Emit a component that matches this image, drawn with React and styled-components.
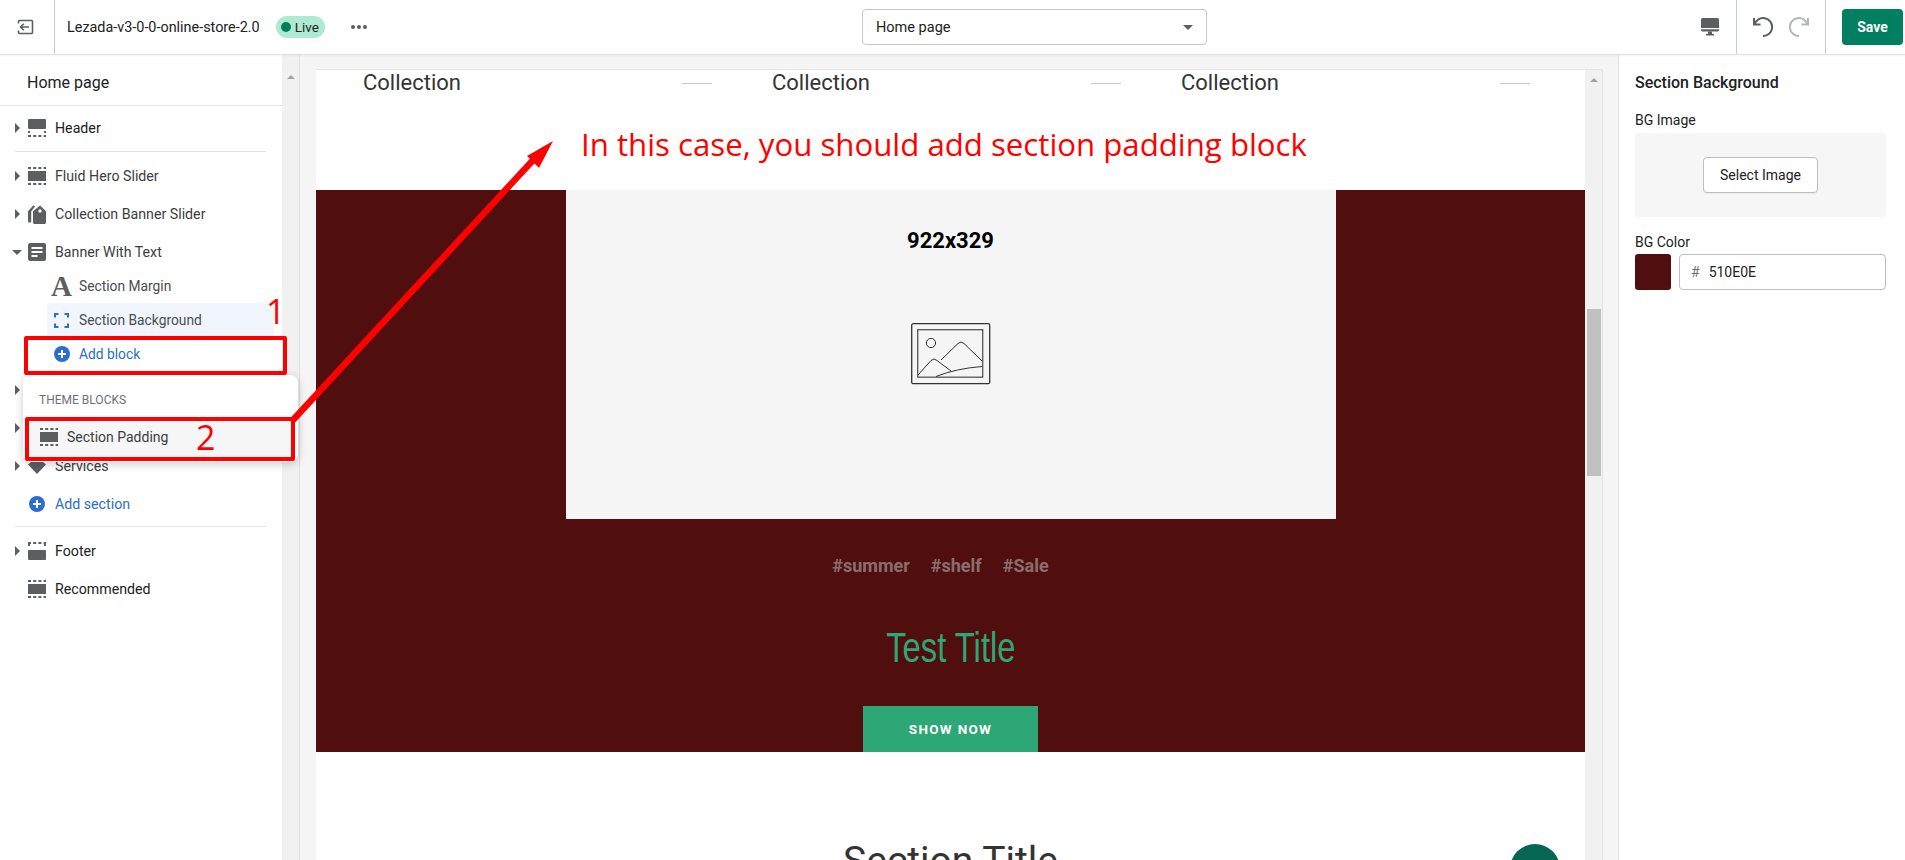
import React from 'react';
import styled, { createGlobalStyle } from 'styled-components';

const uiFont = '"Roboto", "Liberation Sans", sans-serif';
const iconGrey = '#5c5f62';
const blue = '#2c6ecb';

const GlobalStyle = createGlobalStyle`
  html, body { margin: 0; padding: 0; background: #fff; }
  body { font-family: ${uiFont}; color: #202223; overflow: hidden; }
  * { box-sizing: border-box; }
`;

const Page = styled.div`
  position: relative;
  width: 1905px;
  height: 860px;
  display: flex;
  flex-direction: column;
  overflow: hidden;
`;

/* top bar */
const TopBar = styled.header`
  height: 55px;
  flex: none;
  display: flex;
  align-items: center;
  background: #fff;
  border-bottom: 1px solid #dfe1e4;
  box-shadow: 0 1px 2px rgba(0, 0, 0, 0.05);
  position: relative;
  z-index: 2;
`;
const TopLeft = styled.div`
  width: 862px;
  flex: none;
  display: flex;
  align-items: center;
  height: 100%;
`;
const ExitCell = styled.div`
  width: 55px;
  height: 100%;
  display: flex;
  align-items: center;
  justify-content: center;
  border-right: 1px solid #c9cccf;
  padding-right: 3px;
`;
const ThemeName = styled.span`
  margin-left: 12px;
  font-size: 14.4px;
  color: #202223;
`;
const LiveBadge = styled.span`
  margin-left: 16px;
  height: 22px;
  width: 49px;
  padding-left: 5px;
  display: flex;
  align-items: center;
  gap: 4px;
  border-radius: 11px;
  background: #aee9d1;
  font-size: 13.5px;
  color: #202223;
`;
const LiveDot = styled.span`
  width: 10px;
  height: 10px;
  flex: none;
  border-radius: 50%;
  background: #007f5f;
`;
const MoreDots = styled.div`
  margin-left: 26px;
  display: flex;
  gap: 2px;
  span {
    width: 4px;
    height: 4px;
    border-radius: 50%;
    background: ${iconGrey};
  }
`;
const PageSelect = styled.div`
  width: 345px;
  height: 36px;
  flex: none;
  padding: 0 13px 0 13px;
  display: flex;
  align-items: center;
  justify-content: space-between;
  border: 1px solid #c4c6c8;
  border-radius: 4px;
  font-size: 14.5px;
`;
const TopRight = styled.div`
  flex: 1;
  height: 100%;
  display: flex;
  align-items: center;
  justify-content: flex-end;
`;
const ViewCell = styled.div`
  width: 44px;
  height: 100%;
  display: flex;
  align-items: center;
  padding-left: 9px;
`;
const HistoryCell = styled.div`
  width: 90px;
  height: 100%;
  display: flex;
  align-items: center;
  gap: 16px;
  padding-left: 16px;
  border-left: 1px solid #c4cdd5;
  border-right: 1px solid #c4cdd5;
`;
const SaveButton = styled.div`
  width: 61px;
  height: 36px;
  margin: 0 2px 0 16px;
  display: flex;
  align-items: center;
  justify-content: center;
  border-radius: 4px;
  background: #008060;
  color: #fff;
  font-size: 14px;
  font-weight: 700;
`;

/* main area */
const Body = styled.div`
  flex: 1;
  min-height: 0;
  display: flex;
`;
const Sidebar = styled.aside`
  width: 282px;
  flex: none;
  background: #fff;
`;
const SidebarHead = styled.div`
  height: 51px;
  padding: 4px 0 0 27px;
  display: flex;
  align-items: center;
  border-bottom: 1px solid #e1e3e5;
  font-size: 16px;
  color: #202223;
`;
const Tree = styled.div`
  padding-top: 3px;
`;
const Row = styled.div`
  height: 38px;
  display: flex;
  align-items: center;
  padding-left: 15px;
  font-size: 14.2px;
  color: ${p => (p.$dark ? '#202223' : '#3b3e41')};
`;
const Rule = styled.div`
  height: 1px;
  margin: ${p => p.$margin};
  background: #e1e3e5;
`;
const CaretSlot = styled.span`
  width: 13px;
  flex: none;
  display: flex;
`;
const CaretRight = styled.span`
  width: 0;
  height: 0;
  border-left: 5px solid ${iconGrey};
  border-top: 5px solid transparent;
  border-bottom: 5px solid transparent;
`;
const CaretDown = styled.span`
  width: 0;
  height: 0;
  margin-left: -3px;
  border-top: 5px solid ${iconGrey};
  border-left: 5px solid transparent;
  border-right: 5px solid transparent;
`;
const RowIcon = styled.span`
  width: 18px;
  height: 18px;
  flex: none;
  margin-right: 9px;
  display: flex;
  align-items: center;
  justify-content: center;
`;
const SubList = styled.div`
  margin-top: -2px;
  padding-left: 47px;
`;
const SubRow = styled.div`
  height: 34px;
  width: 227px;
  display: flex;
  align-items: center;
  font-size: 13.8px;
  color: ${p => (p.$link ? blue : '#4a4d50')};
  background: ${p => (p.$active ? '#f1f6fe' : 'transparent')};
  border-radius: 3px;
`;
const SubIcon = styled.span`
  width: 32px;
  flex: none;
  display: flex;
  justify-content: center;
  padding-right: 3px;
`;
const SerifA = styled.span`
  font-family: "Liberation Serif", serif;
  font-weight: 700;
  font-size: 29px;
  line-height: 20px;
  color: ${iconGrey};
`;
const AddRow = styled(Row)`
  padding-left: 28px;
  color: ${blue};
`;

/* block popover */
const Popover = styled.div`
  position: absolute;
  left: 23px;
  top: 375px;
  width: 275px;
  height: 87px;
  background: #fff;
  border-radius: 8px;
  box-shadow: 0 2px 10px rgba(0, 0, 0, 0.2);
  z-index: 3;
`;
const PopoverLabel = styled.div`
  height: 43px;
  padding: 18px 0 0 16px;
  font-size: 12px;
  line-height: 14px;
  color: #6d7175;
`;
const PopoverItem = styled.div`
  height: 42px;
  margin: 0 4px;
  padding: 0 0 4px 13px;
  display: flex;
  align-items: center;
  background: #f6f6f7;
  font-size: 14px;
  color: #3b3e41;
`;

/* scrollbars */
const ScrollTrack = styled.div`
  width: 17px;
  flex: none;
  display: flex;
  flex-direction: column;
  align-items: center;
  background: #f1f1f1;
  padding-top: ${p => p.$top}px;
`;
const ScrollUp = styled.span`
  width: 0;
  height: 0;
  flex: none;
  border-bottom: 4px solid #a3a3a3;
  border-left: 4px solid transparent;
  border-right: 4px solid transparent;
`;
const ScrollThumb = styled.span`
  width: 14px;
  height: 167px;
  margin-top: 227px;
  background: #c1c1c1;
`;

/* preview */
const Preview = styled.main`
  flex: 1;
  min-width: 0;
  padding: 14px 15px 0 16px;
  display: flex;
  background: #f5f5f5;
  border-left: 1px solid #e1e1e1;
`;
const Frame = styled.div`
  flex: 1;
  min-width: 0;
  display: flex;
  background: #fff;
  border-top: 1px solid #e6e6e6;
  border-right: 1px solid #e2e2e2;
`;
const Viewport = styled.div`
  position: relative;
  flex: 1;
  min-width: 0;
  overflow: hidden;
  font-family: "Roboto", sans-serif;
`;
const CollectionStrip = styled.div`
  height: 120px;
  padding-left: 47px;
  display: flex;
  color: #333;
`;
const CollectionItem = styled.div`
  width: 409px;
  flex: none;
  height: 26px;
  display: flex;
  align-items: center;
  font-size: 22px;
  line-height: 26px;
`;
const CollectionLine = styled.span`
  width: 30px;
  height: 1px;
  margin-left: auto;
  margin-right: 60px;
  background: #c9c9c9;
`;
const Banner = styled.section`
  height: 562px;
  display: flex;
  flex-direction: column;
  align-items: center;
  background: #510e0e;
`;
const PlaceholderBox = styled.div`
  width: 770px;
  height: 329px;
  flex: none;
  display: flex;
  flex-direction: column;
  align-items: center;
  background: #f5f5f5;
`;
const Dimensions = styled.div`
  margin-top: 39px;
  height: 24px;
  font-size: 22px;
  line-height: 24px;
  font-weight: 700;
  color: #000;
`;
const PlaceholderIcon = styled.svg`
  margin-top: 70px;
`;
const Tags = styled.div`
  margin-top: 37px;
  height: 20px;
  padding-right: 20px;
  display: flex;
  gap: 21px;
  font-size: 18px;
  line-height: 20px;
  font-weight: 700;
  color: #8a6e6e;
`;
const BannerTitle = styled.h2`
  margin: 48px 0 0;
  height: 48px;
  font-family: "Liberation Sans", sans-serif;
  font-size: 42px;
  line-height: 48px;
  font-weight: 400;
  color: #2ca775;
  transform: scaleX(0.78);
`;
const ShowNow = styled.div`
  margin-top: 34px;
  width: 175px;
  height: 46px;
  display: flex;
  align-items: center;
  justify-content: center;
  background: #2ca775;
  color: #fff;
  font-size: 13.5px;
  font-weight: 700;
  letter-spacing: 1.3px;
`;
const SectionTitle = styled.h2`
  margin: 85px 0 0;
  text-align: center;
  font-size: 39px;
  line-height: 48px;
  font-weight: 400;
  color: #333;
`;
const FloatCircle = styled.span`
  position: absolute;
  left: 1194px;
  top: 774px;
  width: 50px;
  height: 50px;
  border-radius: 50%;
  background: #056654;
`;

/* settings panel */
const Settings = styled.aside`
  width: 287px;
  flex: none;
  padding: 0 19px 0 16px;
  background: #fff;
  border-left: 1px solid #e1e3e5;
`;
const SettingsTitle = styled.h3`
  margin: 0;
  height: 51px;
  padding-top: 4px;
  display: flex;
  align-items: center;
  font-size: 16px;
  font-weight: 500;
  color: #202223;
`;
const FieldLabel = styled.div`
  height: 17px;
  margin-top: ${p => p.$top}px;
  font-size: 14px;
  line-height: 17px;
  color: #202223;
`;
const ImageSlot = styled.div`
  height: 84px;
  margin-top: 4px;
  display: flex;
  align-items: center;
  justify-content: center;
  background: #f6f6f7;
  border-radius: 4px;
`;
const SelectButton = styled.div`
  width: 115px;
  height: 36px;
  display: flex;
  align-items: center;
  justify-content: center;
  background: #fff;
  border: 1px solid #babfc3;
  border-radius: 4px;
  box-shadow: 0 1px 0 rgba(0, 0, 0, 0.05);
  font-size: 14px;
  color: #202223;
`;
const ColorRow = styled.div`
  margin-top: 3px;
  display: flex;
  gap: 8px;
`;
const Swatch = styled.div`
  width: 36px;
  height: 36px;
  border-radius: 3px;
  background: #510e0e;
`;
const HexInput = styled.div`
  flex: 1;
  height: 36px;
  padding-left: 11px;
  display: flex;
  align-items: center;
  gap: 9px;
  border: 1px solid #babfc3;
  border-radius: 4px;
  font-size: 14px;
  color: #202223;
  span {
    color: #6d7175;
  }
`;

/* red annotations over the screenshot */
const RedBox = styled.div`
  position: absolute;
  left: ${p => p.$left}px;
  top: ${p => p.$top}px;
  width: ${p => p.$width}px;
  height: ${p => p.$height}px;
  border: 4px solid #f00;
  border-radius: 2px;
  z-index: 4;
`;
const RedNumber = styled.span`
  position: absolute;
  left: ${p => p.$left}px;
  top: ${p => p.$top}px;
  font-family: "Open Sans", sans-serif;
  font-size: 34px;
  line-height: 36px;
  color: #f00;
  z-index: 4;
`;
const RedNote = styled.div`
  position: absolute;
  left: 581px;
  top: 122px;
  font-family: "Open Sans", sans-serif;
  font-size: 31.2px;
  line-height: 44px;
  color: #f00;
  white-space: nowrap;
  z-index: 4;
`;
const ArrowLayer = styled.svg`
  position: absolute;
  left: 0;
  top: 0;
  pointer-events: none;
  z-index: 4;
`;

const ExitIcon = () => (
  <svg width="17" height="16" viewBox="0 0 17 16" fill="none" stroke={iconGrey} strokeWidth="1.6">
    <path d="M1.5 4.5V2.5a1 1 0 0 1 1-1h12a1 1 0 0 1 1 1v11a1 1 0 0 1-1 1h-12a1 1 0 0 1-1-1v-2" />
    <path d="M12 8H3.5M6.8 4.7 3.5 8l3.3 3.3" />
  </svg>
);

const DashLine = ({ y }) => (
  <path d={`M0 ${y}h18`} stroke={iconGrey} strokeWidth="2" strokeDasharray="3 2.2" />
);

// kind says where the solid band sits: top (header), middle (section), bottom (footer)
const LayoutIcon = ({ kind }) => (
  <svg width="18" height="18" viewBox="0 0 18 18">
    {kind === 'top' && (
      <>
        <rect x="0" y="0" width="18" height="10" rx="1" fill={iconGrey} />
        <DashLine y={17} />
        <path d="M1 12v4M17 12v4" stroke={iconGrey} strokeWidth="2" strokeDasharray="2 2" />
      </>
    )}
    {kind === 'middle' && (
      <>
        <DashLine y={1} />
        <rect x="0" y="4" width="18" height="10" fill={iconGrey} />
        <DashLine y={17} />
      </>
    )}
    {kind === 'bottom' && (
      <>
        <DashLine y={1} />
        <path d="M1 2v4M17 2v4" stroke={iconGrey} strokeWidth="2" strokeDasharray="2 2" />
        <rect x="0" y="8" width="18" height="10" rx="1" fill={iconGrey} />
      </>
    )}
  </svg>
);

const TagsIcon = () => (
  <svg width="18" height="20" viewBox="0 0 18 20" fill={iconGrey}>
    <path d="M5.5 1.2 7 2.6 3.2 7.4V18.5H1.6A1.6 1.6 0 0 1 0 17V7.2z" />
    <path d="M12 1.5 18 7.2V18.4a1.6 1.6 0 0 1-1.6 1.6H6.6A1.6 1.6 0 0 1 5 18.4V7.2zM12 5.3a1.7 1.7 0 1 0 0 3.4 1.7 1.7 0 0 0 0-3.4z" fillRule="evenodd" />
  </svg>
);

const TextBlockIcon = () => (
  <svg width="18" height="18" viewBox="0 0 18 18">
    <rect width="18" height="18" rx="2" fill={iconGrey} />
    <path d="M3.5 5h11M3.5 9h11M3.5 13h6" stroke="#fff" strokeWidth="1.8" />
  </svg>
);

const CornersIcon = () => (
  <svg width="15" height="15" viewBox="0 0 15 15" fill="none" stroke={blue} strokeWidth="2">
    <path d="M1 4.5V1h3.5M10.5 1H14v3.5M14 10.5V14h-3.5M4.5 14H1v-3.5" />
  </svg>
);

const PlusIcon = () => (
  <svg width="16" height="16" viewBox="0 0 16 16">
    <circle cx="8" cy="8" r="8" fill={blue} />
    <path d="M8 4v8M4 8h8" stroke="#fff" strokeWidth="2" />
  </svg>
);

const ServicesIcon = () => (
  <svg width="18" height="18" viewBox="0 0 18 18" fill={iconGrey}>
    <path d="M0 7.5 3 5h12l3 2.5L9 17z" />
  </svg>
);

const MonitorIcon = () => (
  <svg width="18" height="18" viewBox="0 0 18 18">
    <path d="M1.5 0h15A1.5 1.5 0 0 1 18 1.5V10H0V1.5A1.5 1.5 0 0 1 1.5 0z" fill={iconGrey} />
    <path d="M0 11.2h18v.8A1.5 1.5 0 0 1 16.5 13.5h-15A1.5 1.5 0 0 1 0 12z" fill={iconGrey} />
    <path d="M7 13.5h4V16h2v1.5H5V16h2z" fill={iconGrey} />
  </svg>
);

const HistoryIcon = ({ color, flip }) => (
  <svg width="20" height="20" viewBox="0 0 20 20" fill="none" stroke={color} strokeWidth="2" transform={flip ? 'scale(-1 1)' : undefined}>
    <path d="M1 1v6.5h6.5" />
    <path d="M1.5 7.5A9 9 0 1 1 10 19" />
  </svg>
);

const ImagePlaceholder = () => (
  <PlaceholderIcon width="80" height="62" viewBox="0 0 80 62" fill="none">
    <rect x="0.7" y="0.7" width="78" height="60" rx="1.5" stroke="#333" strokeWidth="1.3" />
    <rect x="6.7" y="6.7" width="65" height="47.5" stroke="#555" strokeWidth="1.3" />
    <circle cx="20" cy="20" r="4.6" stroke="#333" strokeWidth="1" />
    <path d="M7 52 20 37.5q3-3 6 0L40 48M30 37 47 20.5q3-3 6 0L71 38M25 53.5Q45 45.5 71 43.5" stroke="#333" strokeWidth="1" />
  </PlaceholderIcon>
);

const rows = [
  { label: 'Fluid Hero Slider', icon: <LayoutIcon kind="middle" /> },
  { label: 'Collection Banner Slider', icon: <TagsIcon /> },
];

export default function App() {
  return (
    <Page>
      <GlobalStyle />
      <TopBar>
        <TopLeft>
          <ExitCell><ExitIcon /></ExitCell>
          <ThemeName>Lezada-v3-0-0-online-store-2.0</ThemeName>
          <LiveBadge><LiveDot />Live</LiveBadge>
          <MoreDots><span /><span /><span /></MoreDots>
        </TopLeft>
        <PageSelect>
          Home page
          <CaretDown />
        </PageSelect>
        <TopRight>
          <ViewCell><MonitorIcon /></ViewCell>
          <HistoryCell>
            <HistoryIcon color={iconGrey} />
            <HistoryIcon color="#b5b8ba" flip />
          </HistoryCell>
          <SaveButton>Save</SaveButton>
        </TopRight>
      </TopBar>

      <Body>
        <Sidebar>
          <SidebarHead>Home page</SidebarHead>
          <Tree>
            <Row $dark>
              <CaretSlot><CaretRight /></CaretSlot>
              <RowIcon><LayoutIcon kind="top" /></RowIcon>
              Header
            </Row>
            <Rule $margin="4px 16px 5px 15px" />
            {rows.map(row => (
              <Row key={row.label}>
                <CaretSlot><CaretRight /></CaretSlot>
                <RowIcon>{row.icon}</RowIcon>
                {row.label}
              </Row>
            ))}
            <Row>
              <CaretSlot><CaretDown /></CaretSlot>
              <RowIcon><TextBlockIcon /></RowIcon>
              Banner With Text
            </Row>
            <SubList>
              <SubRow>
                <SubIcon><SerifA>A</SerifA></SubIcon>
                Section Margin
              </SubRow>
              <SubRow $active>
                <SubIcon><CornersIcon /></SubIcon>
                Section Background
              </SubRow>
              <SubRow $link>
                <SubIcon><PlusIcon /></SubIcon>
                Add block
              </SubRow>
            </SubList>
            <Row><CaretSlot><CaretRight /></CaretSlot></Row>
            <Row><CaretSlot><CaretRight /></CaretSlot></Row>
            <Row>
              <CaretSlot><CaretRight /></CaretSlot>
              <RowIcon><ServicesIcon /></RowIcon>
              Services
            </Row>
            <AddRow>
              <RowIcon><PlusIcon /></RowIcon>
              Add section
            </AddRow>
            <Rule $margin="3px 16px 5px 15px" />
            <Row $dark>
              <CaretSlot><CaretRight /></CaretSlot>
              <RowIcon><LayoutIcon kind="bottom" /></RowIcon>
              Footer
            </Row>
            <Row $dark>
              <CaretSlot />
              <RowIcon><LayoutIcon kind="middle" /></RowIcon>
              Recommended
            </Row>
          </Tree>
        </Sidebar>
        <ScrollTrack $top={20}><ScrollUp /></ScrollTrack>

        <Preview>
          <Frame>
            <Viewport>
              <CollectionStrip>
                {[0, 1, 2].map(i => (
                  <CollectionItem key={i}>
                    Collection
                    <CollectionLine />
                  </CollectionItem>
                ))}
              </CollectionStrip>
              <Banner>
                <PlaceholderBox>
                  <Dimensions>922x329</Dimensions>
                  <ImagePlaceholder />
                </PlaceholderBox>
                <Tags>
                  <span>#summer</span>
                  <span>#shelf</span>
                  <span>#Sale</span>
                </Tags>
                <BannerTitle>Test Title</BannerTitle>
                <ShowNow>SHOW NOW</ShowNow>
              </Banner>
              <SectionTitle>Section Title</SectionTitle>
              <FloatCircle />
            </Viewport>
            <ScrollTrack $top={8}>
              <ScrollUp />
              <ScrollThumb />
            </ScrollTrack>
          </Frame>
        </Preview>

        <Settings>
          <SettingsTitle>Section Background</SettingsTitle>
          <FieldLabel $top={6}>BG Image</FieldLabel>
          <ImageSlot>
            <SelectButton>Select Image</SelectButton>
          </ImageSlot>
          <FieldLabel $top={17}>BG Color</FieldLabel>
          <ColorRow>
            <Swatch />
            <HexInput><span>#</span>510E0E</HexInput>
          </ColorRow>
        </Settings>
      </Body>

      <Popover>
        <PopoverLabel>THEME BLOCKS</PopoverLabel>
        <PopoverItem>
          <RowIcon><LayoutIcon kind="middle" /></RowIcon>
          Section Padding
        </PopoverItem>
      </Popover>

      <RedBox $left={24} $top={336} $width={263} $height={39} />
      <RedBox $left={25} $top={417} $width={270} $height={44} />
      <RedNumber $left={266} $top={293}>1</RedNumber>
      <RedNumber $left={196} $top={419}>2</RedNumber>
      <RedNote>In this case, you should add section padding block</RedNote>
      <ArrowLayer width="600" height="480" viewBox="0 0 600 480">
        <path d="M293 420 535 158" stroke="#f00" strokeWidth="6.5" fill="none" />
        <path d="M553 141 527 156 539 168z" fill="#f00" />
      </ArrowLayer>
    </Page>
  );
}
